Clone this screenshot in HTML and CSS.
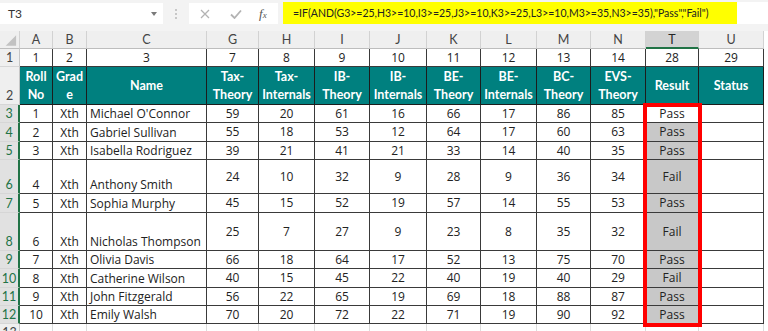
FILE: index.html
```html
<!DOCTYPE html>
<html>
<head>
<meta charset="utf-8">
<link rel="stylesheet" href="styles.css">
</head>
<body>
<div class="bar">
  <div class="namebox"><span>T3</span><span class="caret"></span></div>
  <div class="dots"><svg width="4" height="12" viewBox="0 0 4 12"><circle cx="2" cy="2" r="1" fill="#b8b8b8"/><circle cx="2" cy="6" r="1" fill="#b8b8b8"/><circle cx="2" cy="10" r="1" fill="#b8b8b8"/></svg></div>
  <div class="fxbox">
    <svg class="ico-x" width="10" height="10" viewBox="0 0 10 10"><path d="M1 1 L9 9 M9 1 L1 9" stroke="#b3b3b3" stroke-width="1.3" fill="none"/></svg>
    <svg class="ico-ok" width="12" height="10" viewBox="0 0 12 10"><path d="M1 5.5 L4.5 9 L11 1.5" stroke="#b3b3b3" stroke-width="1.8" fill="none"/></svg>
    <span class="fx"><i>f</i><span class="sub">x</span></span>
  </div>
  <div class="formula"><div class="hl">=IF(AND(G3&gt;=25,H3&gt;=10,I3&gt;=25,J3&gt;=10,K3&gt;=25,L3&gt;=10,M3&gt;=35,N3&gt;=35),"Pass","Fail")</div></div>
</div>

<div class="sheet">
  <!-- column headers -->
  <div class="ch corner"><svg width="20" height="18" viewBox="0 0 20 18"><polygon points="17,4 17,15 6,15" fill="#c2c2c2"/></svg></div>
  <div class="ch">A</div><div class="ch">B</div><div class="ch">C</div><div class="ch">G</div><div class="ch">H</div><div class="ch">I</div><div class="ch">J</div><div class="ch">K</div><div class="ch">L</div><div class="ch">M</div><div class="ch">N</div><div class="ch sel">T</div><div class="ch">U</div>

  <!-- row 1 -->
  <div class="rh">1</div>
  <div class="c">1</div><div class="c">2</div><div class="c">3</div><div class="c v">7</div><div class="c v">8</div><div class="c v">9</div><div class="c v">10</div><div class="c v">11</div><div class="c v">12</div><div class="c v">13</div><div class="c v">14</div><div class="c v">28</div><div class="c v">29</div>

  <!-- row 2 -->
  <div class="rh">2</div>
  <div class="h">Roll<br>No</div><div class="h">Grad<br>e</div><div class="h">Name</div><div class="h">Tax-<br>Theory</div><div class="h">Tax-<br>Internals</div><div class="h">IB-<br>Theory</div><div class="h">IB-<br>Internals</div><div class="h">BE-<br>Theory</div><div class="h">BE-<br>Internals</div><div class="h">BC-<br>Theory</div><div class="h">EVS-<br>Theory</div><div class="h">Result</div><div class="h">Status</div>

  <!-- row 3 -->
  <div class="rh sel">3</div>
  <div class="c">1</div><div class="c">Xth</div><div class="c name">Michael O'Connor</div><div class="c v">59</div><div class="c v">20</div><div class="c v">61</div><div class="c v">16</div><div class="c v">66</div><div class="c v">17</div><div class="c v">86</div><div class="c v">85</div><div class="c v res active">Pass</div><div class="c"></div>

  <!-- row 4 -->
  <div class="rh sel">4</div>
  <div class="c">2</div><div class="c">Xth</div><div class="c name">Gabriel Sullivan</div><div class="c v">55</div><div class="c v">18</div><div class="c v">53</div><div class="c v">12</div><div class="c v">64</div><div class="c v">17</div><div class="c v">60</div><div class="c v">63</div><div class="c v res">Pass</div><div class="c"></div>

  <!-- row 5 -->
  <div class="rh sel">5</div>
  <div class="c">3</div><div class="c">Xth</div><div class="c name">Isabella Rodriguez</div><div class="c v">39</div><div class="c v">21</div><div class="c v">41</div><div class="c v">21</div><div class="c v">33</div><div class="c v">14</div><div class="c v">40</div><div class="c v">35</div><div class="c v res">Pass</div><div class="c"></div>

  <!-- row 6 -->
  <div class="rh sel">6</div>
  <div class="c">4</div><div class="c">Xth</div><div class="c name">Anthony Smith</div><div class="c v">24</div><div class="c v">10</div><div class="c v">32</div><div class="c v">9</div><div class="c v">28</div><div class="c v">9</div><div class="c v">36</div><div class="c v">34</div><div class="c v res">Fail</div><div class="c"></div>

  <!-- row 7 -->
  <div class="rh sel">7</div>
  <div class="c">5</div><div class="c">Xth</div><div class="c name">Sophia Murphy</div><div class="c v">45</div><div class="c v">15</div><div class="c v">52</div><div class="c v">19</div><div class="c v">57</div><div class="c v">14</div><div class="c v">55</div><div class="c v">53</div><div class="c v res">Pass</div><div class="c"></div>

  <!-- row 8 -->
  <div class="rh sel">8</div>
  <div class="c">6</div><div class="c">Xth</div><div class="c name">Nicholas Thompson</div><div class="c v">25</div><div class="c v">7</div><div class="c v">27</div><div class="c v">9</div><div class="c v">23</div><div class="c v">8</div><div class="c v">35</div><div class="c v">32</div><div class="c v res">Fail</div><div class="c"></div>

  <!-- row 9 -->
  <div class="rh sel">9</div>
  <div class="c">7</div><div class="c">Xth</div><div class="c name">Olivia Davis</div><div class="c v">66</div><div class="c v">18</div><div class="c v">64</div><div class="c v">17</div><div class="c v">52</div><div class="c v">13</div><div class="c v">75</div><div class="c v">70</div><div class="c v res">Pass</div><div class="c"></div>

  <!-- row 10 -->
  <div class="rh sel">10</div>
  <div class="c">8</div><div class="c">Xth</div><div class="c name">Catherine Wilson</div><div class="c v">40</div><div class="c v">15</div><div class="c v">45</div><div class="c v">22</div><div class="c v">40</div><div class="c v">19</div><div class="c v">40</div><div class="c v">29</div><div class="c v res">Fail</div><div class="c"></div>

  <!-- row 11 -->
  <div class="rh sel">11</div>
  <div class="c">9</div><div class="c">Xth</div><div class="c name">John Fitzgerald</div><div class="c v">56</div><div class="c v">22</div><div class="c v">65</div><div class="c v">19</div><div class="c v">69</div><div class="c v">18</div><div class="c v">88</div><div class="c v">87</div><div class="c v res">Pass</div><div class="c"></div>

  <!-- row 12 -->
  <div class="rh sel">12</div>
  <div class="c">10</div><div class="c">Xth</div><div class="c name">Emily Walsh</div><div class="c v">70</div><div class="c v">20</div><div class="c v">72</div><div class="c v">22</div><div class="c v">71</div><div class="c v">19</div><div class="c v">90</div><div class="c v">92</div><div class="c v res">Pass</div><div class="c"></div>

  <!-- row 13 -->
  <div class="rh">13</div>
  <div class="e"></div><div class="e"></div><div class="e"></div><div class="e"></div><div class="e"></div><div class="e"></div><div class="e"></div><div class="e"></div><div class="e"></div><div class="e"></div><div class="e"></div><div class="e"></div><div class="e"></div>

  <div class="selbox"></div>
</div>
</body>
</html>
```

FILE: styles.css
```css
html, body {
  margin: 0;
  padding: 0;
  background: #ffffff;
}
body {
  width: 768px;
  height: 331px;
  overflow: hidden;
  font-family: Lato, "Open Sans", "Liberation Sans", sans-serif;
  color: #222222;
}

/* ---------- formula bar ---------- */
.bar {
  height: 31px;
  box-sizing: border-box;
  padding-top: 3px;
  background: #f3f3f3;
  display: flex;
  align-items: flex-start;
}
.namebox {
  width: 163px;
  height: 21px;
  box-sizing: border-box;
  background: #ffffff;
  display: flex;
  align-items: center;
  justify-content: space-between;
  padding: 0 6px 0 8px;
  font-size: 12px;
  color: #333333;
}
.caret {
  width: 0;
  height: 0;
  border-left: 3.5px solid transparent;
  border-right: 3.5px solid transparent;
  border-top: 4px solid #7a7a7a;
}
.dots {
  width: 26px;
  height: 21px;
  display: flex;
  align-items: center;
  justify-content: center;
}
.fxbox {
  width: 89px;
  height: 21px;
  background: #ffffff;
  display: flex;
  align-items: center;
  box-sizing: border-box;
  padding-left: 11px;
}
.ico-x { margin-right: 20px; }
.ico-ok { margin-right: 17px; }
.fx {
  font-family: "Liberation Serif", serif;
  font-size: 13px;
  color: #555555;
}
.fx .sub {
  font-size: 9px;
  font-style: italic;
}
.formula {
  flex: 1;
  margin-left: 5px;
  height: 22px;
  margin-top: -1px;
  background: #ffffff;
  display: flex;
}
.formula .hl {
  width: 454px;
  background: #ffff00;
  box-sizing: border-box;
  padding-left: 10px;
  display: flex;
  align-items: center;
  font-size: 10.5px;
  color: #222222;
  white-space: nowrap;
}

/* ---------- sheet grid ---------- */
.sheet {
  position: relative;
  display: grid;
  grid-template-columns: 20px 33px 34px 120px 52px 56px 55px 57px 54px 56px 54px 55px 53px 65px;
  grid-template-rows: 18px 18px 38px 18px 19px 18px 34px 19px 38px 18px 19px 18px 18px 18px;
  font-size: 12px;
}
.sheet > div {
  box-sizing: border-box;
  display: flex;
  justify-content: center;
  align-items: flex-end;
  overflow: hidden;
  white-space: nowrap;
}

.ch {
  background: #efefef;
  border-right: 1px solid #d2d2d2;
  border-bottom: 1px solid #bdbdbd;
  color: #444444;
  font-size: 12.5px;
  align-items: center !important;
}
.ch.corner {
  padding: 0;
}
.ch.sel {
  background: #d3d3d3;
  border-bottom: 2px solid #217346;
  color: #262626;
}

.rh {
  background: #efefef;
  border-right: 1px solid #c6c6c6;
  border-bottom: 1px solid #d6d6d6;
  color: #444444;
  font-size: 12.5px;
  padding-bottom: 1px;
}
.rh.sel {
  background: #e1e1e1;
  color: #217346;
  border-right: 2px solid #217346;
}

.c {
  border-right: 1px solid #3a3a3a;
  border-bottom: 1px solid #3a3a3a;
  color: #222222;
  font-family: "Open Sans", Lato, sans-serif;
  font-size: 12px;
  line-height: 14px;
  padding-bottom: 1px;
}
.c.v {
  align-items: center !important;
  padding-bottom: 0;
}
.c.name {
  justify-content: flex-start !important;
  padding-left: 3px;
}
.c.res {
  background: #c8c8c8;
}
.c.res.active {
  background: #ffffff;
}

.h {
  background: #00807f;
  border-right: 1px solid #1c1c1c;
  border-bottom: 1px solid #1c1c1c;
  color: #ffffff;
  font-weight: 700;
  font-size: 12.5px;
  line-height: 18px;
  text-align: center;
  align-items: center !important;
}

.e {
  background: #ffffff;
  border-right: 1px solid #dcdcdc;
}

.selbox {
  position: absolute;
  left: 643px;
  top: 72px;
  width: 59px;
  height: 224px;
  border: 4px solid #ff0000;
  box-sizing: border-box;
  pointer-events: none;
}
```
